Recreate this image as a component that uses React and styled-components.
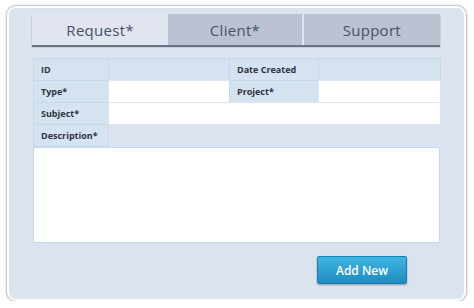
import React from 'react';
import styled, { createGlobalStyle } from 'styled-components';

const Global = createGlobalStyle`
  html, body {
    margin: 0;
    padding: 0;
    background: #ffffff;
  }
  body {
    font-family: "Open Sans", "DejaVu Sans", sans-serif;
  }
`;

const Panel = styled.div`
  box-sizing: border-box;
  margin: 6px 0 0 7px;
  width: 459px;
  height: 295px;
  background: #dbe3ef;
  border: 2px solid #ffffff;
  border-radius: 9px;
  box-shadow: 0 0 2px 1px rgba(0, 0, 0, 0.28);
  padding: 6px 24px 0 23px;
  display: flex;
  flex-direction: column;
`;

const Tabs = styled.div`
  display: flex;
  height: 31px;
  box-shadow: 0 2px 1px rgba(70, 78, 95, 0.75);
`;

const Tab = styled.div`
  width: ${(p) => p.$w}px;
  display: flex;
  align-items: center;
  justify-content: center;
  background: ${(p) => (p.$active ? '#e0e5ef' : '#bbc3d3')};
  border-left: ${(p) => (p.$sep ? '2px solid #dfe4ee' : 'none')};
  color: #485165;
  font-size: 15px;
  font-weight: 500;
  letter-spacing: 0.3px;
`;

const Grid = styled.div`
  margin-top: 13px;
  margin-left: 1px;
  display: grid;
  grid-template-columns: 75px 121px 89px 122px;
  grid-auto-rows: 22px;
`;

const Label = styled.div`
  box-sizing: border-box;
  background: #d5e2ef;
  border: 1px solid #c3dbed;
  margin: 0 -1px -1px 0;
  display: flex;
  align-items: center;
  padding-left: 7px;
  font-size: 9px;
  font-weight: 700;
  color: #2e3440;
`;

const Value = styled.div`
  box-sizing: border-box;
  background: ${(p) => (p.$filled ? '#d5e2ef' : '#ffffff')};
  border: 1px solid ${(p) => (p.$filled ? '#c3dbed' : '#d9e8f4')};
  margin: 0 -1px -1px 0;
  grid-column: ${(p) => p.$span || 'auto'};
`;

const TextArea = styled.div`
  box-sizing: border-box;
  margin: 1px 0 0 1px;
  width: 407px;
  height: 96px;
  background: #ffffff;
  border: 1px solid #c3dbed;
`;

const Footer = styled.div`
  display: flex;
  justify-content: flex-end;
  padding-right: 33px;
  margin-top: 13px;
`;

const Button = styled.button`
  width: 90px;
  height: 28px;
  border: 1px solid #1b7fae;
  border-radius: 2px;
  background: linear-gradient(#42b6e2, #1d8cc0);
  box-shadow: 0 1px 2px rgba(0, 0, 0, 0.35);
  color: #ffffff;
  font-family: "Open Sans", "DejaVu Sans", sans-serif;
  font-size: 12px;
  font-weight: 600;
  cursor: pointer;
`;

export default function App() {
  return (
    <>
      <Global />
      <Panel>
        <Tabs>
          <Tab $active $w={137}>Request*</Tab>
          <Tab $w={134}>Client*</Tab>
          <Tab $sep $w={137}>Support</Tab>
        </Tabs>
        <Grid>
          <Label>ID</Label>
          <Value $filled />
          <Label>Date Created</Label>
          <Value $filled />
          <Label>Type*</Label>
          <Value />
          <Label>Project*</Label>
          <Value />
          <Label>Subject*</Label>
          <Value $span="2 / span 3" />
          <Label>Description*</Label>
        </Grid>
        <TextArea />
        <Footer>
          <Button>Add New</Button>
        </Footer>
      </Panel>
    </>
  );
}
